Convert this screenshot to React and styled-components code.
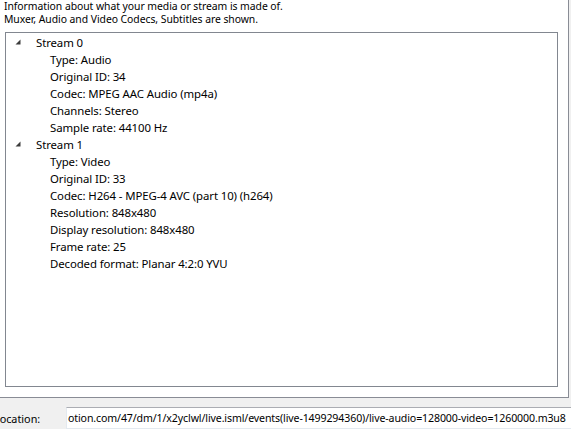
import React from 'react'
import styled, {createGlobalStyle} from 'styled-components'

const GlobalStyle = createGlobalStyle`
  html, body {
    margin: 0;
    padding: 0;
    background: #f0f0f0;
    overflow: hidden;
  }
  body {
    font-family: "Noto Sans", "Liberation Sans", sans-serif;
    font-size: 12px;
    color: #000;
  }
`

const Window = styled.div`
  width: 571px;
  height: 429px;
  display: flex;
  flex-direction: column;
  background: #f0f0f0;
`

const TabPage = styled.div`
  width: 569px;
  height: 402px;
  background: #fff;
  border-right: 1px solid #898c95;
  border-bottom: 1px solid #898c95;
  display: flex;
  flex-direction: column;
  padding: 0 10px 10px 5px;
  box-sizing: border-box;
`

const Description = styled.p`
  margin: 0 0 6px -1px;
  line-height: 13px;
  font-size: 10.4px;
  letter-spacing: -0.05px;
`

const TreeBox = styled.ul`
  flex: 1;
  margin: 0;
  padding: 1px 0 0 0;
  list-style: none;
  border: 1px solid #828790;
  background: #fff;
`

const Row = styled.li`
  display: flex;
  align-items: center;
  height: 17px;
  padding-left: ${p => p.$depth ? 44 : 9}px;
  font-size: 11.4px;
  letter-spacing: -0.1px;
  white-space: nowrap;
`

const Expander = styled.span`
  width: 6px;
  height: 6px;
  margin-right: 15px;
  margin-top: -1px;
  display: inline-flex;
`

const Footer = styled.div`
  flex: 1;
  display: flex;
  align-items: flex-start;
  padding-top: 9px;
`

const Label = styled.span`
  width: 72px;
  margin-left: -6px;
  padding-top: 4px;
  font-size: 10.8px;
`

const Field = styled.div`
  flex: 1;
  height: 22px;
  background: #fff;
  border: 1px solid #e3e9ef;
  border-top-color: #abadb3;
  border-right: none;
  padding: 3px 0 0 1px;
  box-sizing: border-box;
  font-size: 10.6px;
  letter-spacing: -0.12px;
  white-space: nowrap;
  overflow: hidden;
`

const streams = [
  {
    name: 'Stream 0',
    info: [
      'Type: Audio',
      'Original ID: 34',
      'Codec: MPEG AAC Audio (mp4a)',
      'Channels: Stereo',
      'Sample rate: 44100 Hz',
    ],
  },
  {
    name: 'Stream 1',
    info: [
      'Type: Video',
      'Original ID: 33',
      'Codec: H264 - MPEG-4 AVC (part 10) (h264)',
      'Resolution: 848x480',
      'Display resolution: 848x480',
      'Frame rate: 25',
      'Decoded format: Planar 4:2:0 YVU',
    ],
  },
]

function ExpandedArrow() {
  return (
    <Expander>
      <svg width="6" height="6" viewBox="0 0 6 6">
        <polygon points="5.5,0.5 5.5,5.5 0.5,5.5" fill="#3c3c3c" />
      </svg>
    </Expander>
  )
}

export default function App() {
  return (
    <Window>
      <GlobalStyle />
      <TabPage>
        <Description>
          Information about what your media or stream is made of.<br />
          Muxer, Audio and Video Codecs, Subtitles are shown.
        </Description>
        <TreeBox>
          {streams.map(s => (
            <React.Fragment key={s.name}>
              <Row>
                <ExpandedArrow />
                {s.name}
              </Row>
              {s.info.map(line => (
                <Row key={line} $depth={1}>{line}</Row>
              ))}
            </React.Fragment>
          ))}
        </TreeBox>
      </TabPage>
      <Footer>
        <Label>Location:</Label>
        <Field>
          otion.com/47/dm/1/x2yclwl/live.isml/events(live-1499294360)/live-audio=128000-video=1260000.m3u8
        </Field>
      </Footer>
    </Window>
  )
}
